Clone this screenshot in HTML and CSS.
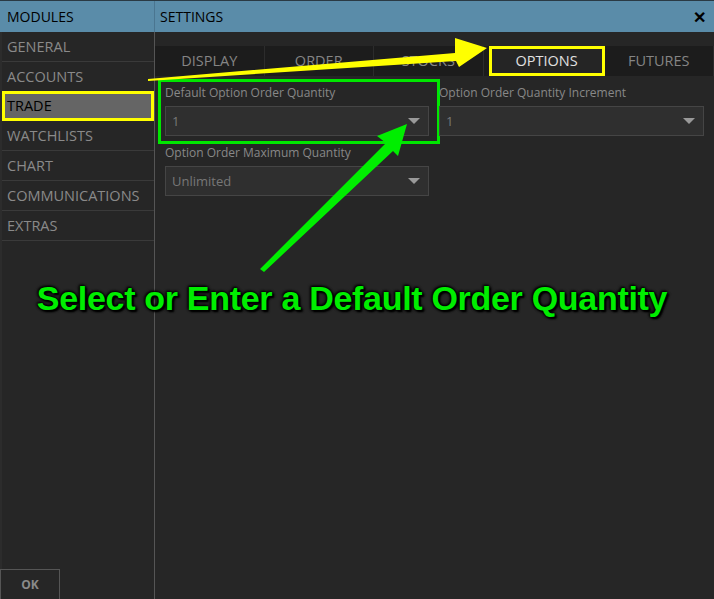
FILE: index.html
```html
<!DOCTYPE html>
<html lang="en">
<head>
    <meta charset="UTF-8">
    <title>Settings</title>
    <link rel="stylesheet" href="styles.css">
</head>
<body>
    <div class="app">
        <div class="head mod-head">MODULES</div>
        <div class="head set-head">
            <span>SETTINGS</span>
            <span class="close">&#x2715;</span>
        </div>

        <!-- Modules list -->
        <div class="sidebar">
            <div class="item">GENERAL</div>
            <div class="item">ACCOUNTS</div>
            <div class="item active">TRADE</div>
            <div class="item">WATCHLISTS</div>
            <div class="item">CHART</div>
            <div class="item">COMMUNICATIONS</div>
            <div class="item">EXTRAS</div>
            <div class="spacer"></div>
            <button class="ok">OK</button>
        </div>

        <!-- Settings panel -->
        <div class="panel">
            <div class="tabs">
                <div class="tab">DISPLAY</div>
                <div class="tab">ORDER</div>
                <div class="tab">STOCKS</div>
                <div class="tab current">OPTIONS</div>
                <div class="tab">FUTURES</div>
            </div>
            <div class="form">
                <div class="field hl">
                    <label>Default Option Order Quantity</label>
                    <div class="select">1<span class="caret"></span></div>
                </div>
                <div class="field">
                    <label>Option Order Quantity Increment</label>
                    <div class="select">1<span class="caret"></span></div>
                </div>
                <div class="field">
                    <label>Option Order Maximum Quantity</label>
                    <div class="select">Unlimited<span class="caret"></span></div>
                </div>
            </div>
        </div>

        <!-- Annotations -->
        <svg class="marks" width="714" height="599" viewBox="0 0 714 599">
            <polygon fill="#ffff00" points="148,78 148,80 456,60 459,66 487,47 455,37 455,52"/>
            <polygon fill="#00ee00" points="260,268 264,271 393,150 398,155 407,123 377,135 386,142"/>
        </svg>
        <div class="callout">Select or Enter a Default Order Quantity</div>
    </div>
</body>
</html>
```

FILE: styles.css
```css
* { box-sizing: border-box; }
body { margin: 0; background: #262626; font-family: "Open Sans", sans-serif; }
.app { position: relative; width: 714px; height: 599px; display: grid; grid-template-columns: 155px 1fr; grid-template-rows: 31px 1fr; overflow: hidden; border-top: 1px solid #2a3a44; }
.head { background: #5a8ca9; color: #000; font-size: 14px; display: flex; align-items: center; padding-left: 7px; }
.mod-head { border-right: 1px solid #4a7590; }
.set-head { justify-content: space-between; padding-left: 5px; padding-right: 8px; }
.close { font-weight: bold; font-size: 16px; }
.sidebar { display: flex; flex-direction: column; border-right: 1px solid #555; border-left: 2px solid #2c2c2c; }
.item { height: 30px; line-height: 30px; padding-left: 5px; font-size: 14.5px; color: #8a8a8a; border-bottom: 1px solid #3a3a3a; }
.item.active { background: #656565; color: #000; border: 3px solid #ffff00; line-height: 24px; padding-left: 2px; margin-top: -1px; }
.spacer { flex: 1; }
.ok { width: 60px; height: 30px; margin-left: -2px; background: #262626; border: 1px solid #555; border-bottom: none; color: #8a8a8a; font-family: "Open Sans", sans-serif; font-weight: bold; font-size: 12px; }
.panel { display: flex; flex-direction: column; }
.tabs { display: flex; margin-top: 14px; height: 30px; background: #1c1c1c; }
.tab { flex: 1; text-align: center; line-height: 30px; font-size: 14.5px; color: #858585; border-right: 1px solid #2c2c2c; }
.tab.current { flex: 0 0 116px; margin-left: 5px; color: #e0e0e0; background: #252525; border: 3px solid #ffff00; line-height: 24px; }
.form { display: grid; grid-template-columns: 264px 265px; column-gap: 10px; row-gap: 9px; padding: 9px 0 0 10px; }
.field { position: relative; }
.field label { display: block; font-size: 12px; color: #888; height: 21px; line-height: 16px; }
.field.hl::after { content: ""; position: absolute; top: -6px; left: -7px; right: -11px; bottom: -8px; border: 3px solid #00e600; }
.select { position: relative; height: 30px; background: #2f2f2f; border: 1px solid #454545; color: #777; font-size: 13px; line-height: 28px; padding-left: 6px; }
.caret { position: absolute; right: 8px; top: 11px; border-left: 6px solid transparent; border-right: 6px solid transparent; border-top: 6px solid #999; }
.marks { position: absolute; left: 0; top: 0; pointer-events: none; }
.callout { position: absolute; left: 0; right: 10px; top: 280px; line-height: 34px; text-align: center; font-family: "Liberation Sans", Arial, sans-serif; font-weight: bold; font-size: 34px; color: #00ee00; letter-spacing: -0.3px; text-shadow: 0 0 2px #000, 0 0 3px #000, 1px 1px 3px #000, -1px -1px 3px #000, 2px 2px 2px #000; }
```
